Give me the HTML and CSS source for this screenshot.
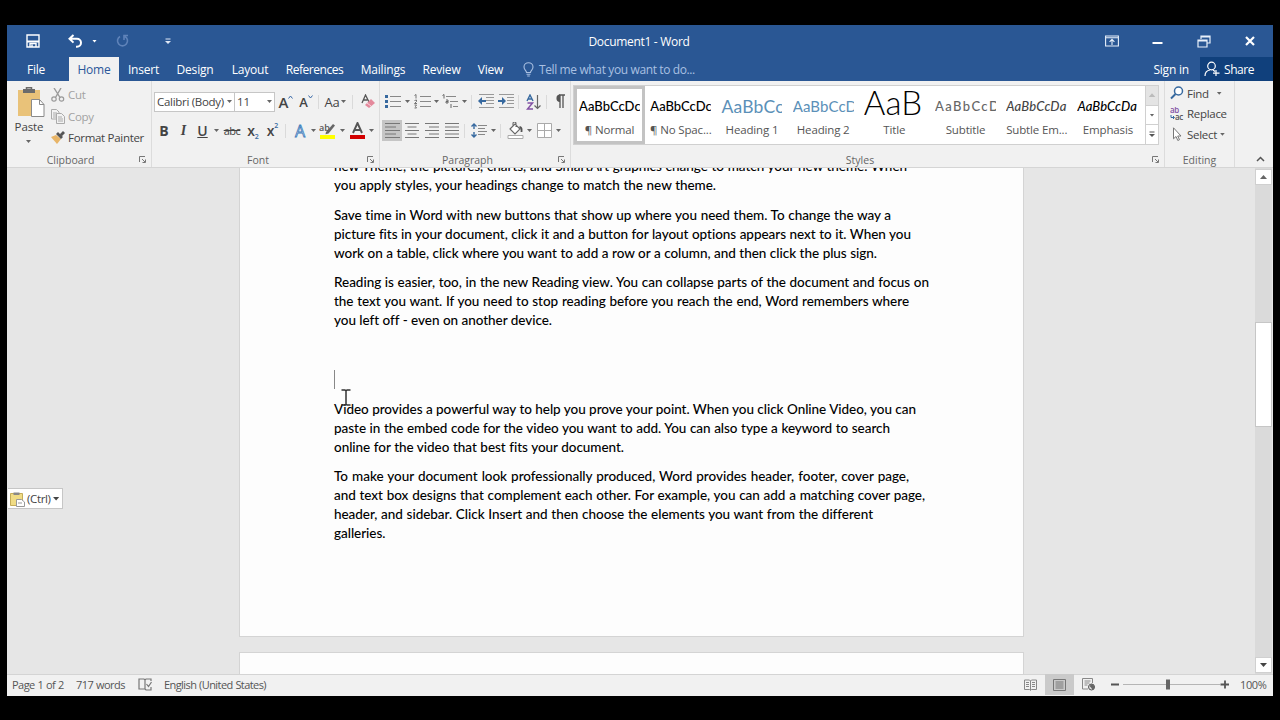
FILE: index.html
```html
<!DOCTYPE html>
<html lang="en">
<head>
<meta charset="utf-8">
<title>Document1 - Word</title>
<link rel="stylesheet" href="styles.css">
</head>
<body>
<div class="window">
  <header class="titlebar">
    <div class="quick">
      <svg class="q-save" width="14" height="14" viewBox="0 0 14 14"><path d="M1 1h12v12H1z" fill="none" stroke="#fff" stroke-width="1.400"/><path d="M1 6.500h12v2H1z" fill="#fff"/><path d="M4 13V9.500h6V13M6 10.500V13" fill="none" stroke="#fff" stroke-width="1.400"/></svg>
      <svg class="q-undo" width="15" height="14" viewBox="0 0 15 14"><path d="M5.500 1L1.500 4.800l4 3.800M2 4.800h7a4 4 0 0 1 0 8H8" fill="none" stroke="#fff" stroke-width="2"/></svg>
      <i class="caret light q-c1"></i>
      <svg class="q-redo" width="13" height="14" viewBox="0 0 13 14"><path d="M4 2.500a5 5 0 1 0 5 0M8 6V1.500h4" fill="none" stroke="#5f83b9" stroke-width="1.600"/></svg>
      <svg class="q-more" width="6" height="7" viewBox="0 0 6 7"><path d="M.5 1h5" stroke="#dfe8f5"/><path d="M0 3h6L3 6z" fill="#dfe8f5"/></svg>
    </div>
    <div class="title">Document1 - Word</div>
    <div class="controls">
      <svg width="14" height="12" viewBox="0 0 14 12"><path d="M.6 1h12.800v10H.6zM1 2.800h12M7 10V4.500M4.600 6.800L7 4.400l2.400 2.400" fill="none" stroke="#e8f0fa" stroke-width="1.100"/></svg>
      <svg class="c-min" width="11" height="12" viewBox="0 0 11 12"><path d="M.5 8h10" stroke="#fff" stroke-width="2"/></svg>
      <svg class="c-res" width="14" height="13" viewBox="0 0 14 13"><path d="M1 5h9v7H1zM1 6h9M4 4V1h9v7h-3M4 2h9" fill="none" stroke="#e8f0fa" stroke-width="1.200"/></svg>
      <svg class="c-close" width="10" height="10" viewBox="0 0 10 10"><path d="M1 1l8 8M9 1L1 9" stroke="#fff" stroke-width="2.200"/></svg>
    </div>
  </header>
  <nav class="tabs">
    <span class="tab t-file">File</span><span class="tab t-home">Home</span><span class="tab t-ins">Insert</span><span class="tab t-des">Design</span><span class="tab t-lay">Layout</span><span class="tab t-ref">References</span><span class="tab t-mail">Mailings</span><span class="tab t-rev">Review</span><span class="tab t-view">View</span>
    <span class="tell"><svg width="11" height="15" viewBox="0 0 11 15"><path d="M3.500 10.500c0-2-2.500-2.500-2.500-5.500a4.500 4.300 0 0 1 9 0c0 3-2.500 3.500-2.500 5.500zM3.500 12.300h4M4.200 14h2.600" fill="none" stroke="#a9c0e2" stroke-width="1.100"/></svg><span>Tell me what you want to do...</span></span>
    <span class="signin">Sign in</span>
    <span class="share"><svg width="16" height="16" viewBox="0 0 16 16"><circle cx="7.500" cy="5" r="3.800" fill="none" stroke="#fff" stroke-width="1.200"/><path d="M1 15c0-3.500 2-5.500 5-6M9 9l2 1.500M12 9v6M9 12.200h6.500" fill="none" stroke="#fff" stroke-width="1.200"/></svg><span>Share</span></span>
  </nav>
  <section class="ribbon">
    <div class="group g-clip">
      <div class="clip">
        <div class="paste">
          <svg width="28" height="31" viewBox="0 0 28 31"><path d="M1 3h22v26H1z" fill="#e9c279"/><path d="M6 2h12v4H6z" fill="#6b6b6b"/><path d="M9.500 2.500V.8h5v1.700" fill="none" stroke="#6b6b6b" stroke-width="1.500"/><path d="M14.500 12.500h8l4.500 5v12H14.500z" fill="#fff" stroke="#8a8a8a"/><path d="M22.500 12.500v5H27" fill="none" stroke="#8a8a8a"/></svg>
          <span>Paste</span><i class="caret"></i>
        </div>
        <div class="cliplist">
          <div class="cmd off"><svg width="14" height="14" viewBox="0 0 14 14"><path d="M3 0l6 9.500M10 0L4.500 9.500" stroke="#9a9a9a" stroke-width="1.400"/><circle cx="3" cy="11" r="2.200" fill="none" stroke="#9a9a9a" stroke-width="1.200"/><circle cx="10.500" cy="11" r="2.200" fill="none" stroke="#9a9a9a" stroke-width="1.200"/></svg><span>Cut</span></div>
          <div class="cmd off"><svg width="14" height="15" viewBox="0 0 14 15"><path d="M.5.5h5l2.500 2.500v7H.5zM2 4h4M2 6h4M2 8h3" fill="#f2f2f2" stroke="#aaa"/><path d="M5.500 4.500h5l3 3v7h-8zM7 8h4M7 10h5M7 12h5" fill="#f2f2f2" stroke="#aaa"/></svg><span>Copy</span></div>
          <div class="cmd fmt"><svg width="14" height="13" viewBox="0 0 14 13"><path d="M0 6l5-2 5 4-4 5z" fill="#e8b568"/><path d="M5 3l2-2 5 5-2 2zM9 3l3-3 2 2-3 3z" fill="#555"/></svg><span>Format Painter</span></div>
        </div>
      </div>
      <div class="label"><span>Clipboard</span><svg class="launch" width="7" height="7" viewBox="0 0 7 7"><path d="M.5 6V.5H6M3 3l3 3M6.500 3.500v3h-3" fill="none" stroke="#777"/></svg></div>
    </div>

    <div class="group g-font">
      <div class="row">
        <div class="combo fontname"><span>Calibri (Body)</span><i class="caret"></i></div><div class="combo fontsize"><span>11</span><i class="caret"></i></div>
        <b class="c w20 grow">A<svg width="5" height="4" viewBox="0 0 5 4"><path d="M.5 3.500L2.500 1l2 2.500" fill="none" stroke="#3a6aa8"/></svg></b>
        <b class="c w20 shrink">A<svg width="5" height="4" viewBox="0 0 5 4"><path d="M.5.5L2.500 3l2-2.500" fill="none" stroke="#3a6aa8"/></svg></b>
        <i class="sep m3"></i><span class="c w18 case">Aa</span><i class="caret"></i><i class="sep m5"></i>
        <span class="c w22"><svg width="15" height="15" viewBox="0 0 15 15"><path d="M1 9l3.500-8L8 8M2.300 6h4" fill="none" stroke="#555" stroke-width="1.300"/><path d="M4 11l6-6 4 4-6 5z" fill="#e4899c"/><path d="M6 9l4 3" stroke="#f6d5dc"/></svg></span>
      </div>
      <div class="row">
        <b class="c w20">B</b><b class="c w19 ital">I</b><b class="c w19 und">U</b><i class="caret cw9"></i><span class="c w22 strike">abc</span><b class="c w20 small">x<sub>2</sub></b><b class="c w19 small">x<sup>2</sup></b><i class="sep m3"></i>
        <span class="c w20 fx">A</span><i class="caret cw7"></i>
        <span class="c w22"><svg width="18" height="17" viewBox="0 0 18 17"><text x="0" y="9" class="icontext hl">ab</text><path d="M7 10l7-8 2 1.500-6.500 8-3 .8z" fill="#666"/><path d="M1 13h15v4H1z" fill="#ffff00"/></svg></span><i class="caret cw7"></i>
        <span class="c w22"><svg width="17" height="17" viewBox="0 0 17 17"><path d="M4 11L8.500 1 13 11M5.500 8h6" fill="none" stroke="#555" stroke-width="1.900"/><path d="M1 13h15v4H1z" fill="#d30000"/></svg></span><i class="caret cw7"></i>
      </div>
      <div class="label"><span>Font</span><svg class="launch" width="7" height="7" viewBox="0 0 7 7"><path d="M.5 6V.5H6M3 3l3 3M6.500 3.500v3h-3" fill="none" stroke="#777"/></svg></div>
    </div>

    <div class="group g-para">
      <div class="row">
        <span class="c w22"><svg width="16" height="15" viewBox="0 0 16 15"><path d="M5 2.500h11M5 7.500h11M5 12.500h11" stroke="#888"/><path d="M0 1h3v3H0zM0 6h3v3H0zM0 11h3v3H0z" fill="#37699f"/></svg></span><i class="caret cw7"></i>
        <span class="c w22"><svg width="17" height="15" viewBox="0 0 17 15"><path d="M6 2.500h11M6 7.500h11M6 12.500h11" stroke="#888"/><path d="M.5 1.500L2 .5v4M.5 6.500l2-.5v1.500l-2 2h2.500M.5 11h2l-1 1.500 1 1.500h-2" fill="none" stroke="#666" stroke-width=".9"/></svg></span><i class="caret cw7"></i>
        <span class="c w21"><svg width="17" height="15" viewBox="0 0 17 15"><path d="M4 2.500h10M8 7.500h8M11 12.500h5" stroke="#888"/><path d="M.5 1.500L2 .5v4M4 6h2v3H4v-1.500h2M9 10v4" fill="none" stroke="#666"/></svg></span><i class="caret cw7"></i>
        <i class="sep m3"></i>
        <span class="c w20"><svg width="16" height="15" viewBox="0 0 16 15"><path d="M1 .5h15M8 3.500h8M8 6.500h8M8 9.500h8M1 13.500h15" stroke="#999"/><path d="M0 7l4-4v3h4v2H4v3z" fill="#37699f"/></svg></span>
        <span class="c w20"><svg width="16" height="15" viewBox="0 0 16 15"><path d="M1 .5h15M9 3.500h7M9 6.500h7M9 9.500h7M1 13.500h15" stroke="#999"/><path d="M8 7L4 3v3H0v2h4v3z" fill="#37699f"/></svg></span>
        <i class="sep m2"></i>
        <span class="c w22 sort"><svg width="15" height="16" viewBox="0 0 15 16"><path d="M1 7l3-6 3 6M2 5h4" fill="none" stroke="#37699f" stroke-width="1.400"/><path d="M1.500 9h5l-5 6H7" fill="none" stroke="#8352a4" stroke-width="1.500"/><path d="M11.500 1v13M8.500 11.500l3 3 3-3" fill="none" stroke="#666" stroke-width="1.200"/></svg></span>
        <i class="sep m1"></i>
        <span class="c w20"><svg width="11" height="15" viewBox="0 0 11 15"><path d="M5 1h6M6 1v13M9 1v13" stroke="#555" stroke-width="1.300"/><path d="M6 .5v7.500a3.500 3.700 0 0 1 0-7.500z" fill="#555"/></svg></span>
      </div>
      <div class="row">
        <span class="c w20 pressed"><svg width="15" height="15" viewBox="0 0 15 15"><path d="M0 .5h15M0 4h11M0 7.500h15M0 11h11M0 14.500h15" stroke="#777"/></svg></span>
        <span class="c w20"><svg width="14" height="15" viewBox="0 0 14 15"><path d="M0 .5h14M2.500 4h9M0 7.500h14M2.500 11h9M0 14.500h14" stroke="#777"/></svg></span>
        <span class="c w20"><svg width="14" height="15" viewBox="0 0 14 15"><path d="M0 .5h14M4 4h10M0 7.500h14M4 11h10M0 14.500h14" stroke="#777"/></svg></span>
        <span class="c w20"><svg width="14" height="15" viewBox="0 0 14 15"><path d="M0 .5h14M0 4h14M0 7.500h14M0 11h14M0 14.500h14" stroke="#777"/></svg></span>
        <i class="sep m2"></i>
        <span class="c w22"><svg width="16" height="15" viewBox="0 0 16 15"><path d="M7 2.500h9M7 5.500h7M7 8.500h9M7 11.500h7" stroke="#888"/><path d="M3 1v5M.5 3.500L3 1l2.500 2.500M3 9v5M.5 11.500L3 14l2.500-2.500" fill="none" stroke="#37699f" stroke-width="1.400"/></svg></span><i class="caret cw7"></i>
        <i class="sep m3"></i>
        <span class="c w20"><svg width="17" height="17" viewBox="0 0 17 17"><path d="M3 7l5-5 5 5-5 5zM6 4V1.500a1.500 1.500 0 0 1 3 0V5" fill="#fff" stroke="#666" stroke-width="1.100"/><path d="M12.500 5c3 .5 2 3 2 5" fill="none" stroke="#555" stroke-width="1.800"/><path d="M1 13.500h15v3H1z" fill="#fff" stroke="#aaa"/></svg></span><i class="caret cw9"></i>
        <span class="c w20"><svg width="15" height="15" viewBox="0 0 15 15"><path d="M.5.5h14v14H.5zM7.500 1v13M1 7.500h13" fill="#fff" stroke="#aaa"/></svg></span><i class="caret cw9"></i>
      </div>
      <div class="label"><span>Paragraph</span><svg class="launch" width="7" height="7" viewBox="0 0 7 7"><path d="M.5 6V.5H6M3 3l3 3M6.500 3.500v3h-3" fill="none" stroke="#777"/></svg></div>
    </div>

    <div class="group g-styles">
      <div class="gallery">
        <div class="style sel"><span class="prev">AaBbCcDc</span><span class="nm">¶ Normal</span></div>
        <div class="style"><span class="prev">AaBbCcDc</span><span class="nm">¶ No Spac...</span></div>
        <div class="style"><span class="prev h1">AaBbCc</span><span class="nm">Heading 1</span></div>
        <div class="style"><span class="prev h2">AaBbCcD</span><span class="nm">Heading 2</span></div>
        <div class="style"><span class="prev ttl">AaB</span><span class="nm">Title</span></div>
        <div class="style"><span class="prev sub">AaBbCcD</span><span class="nm">Subtitle</span></div>
        <div class="style"><span class="prev sem">AaBbCcDa</span><span class="nm">Subtle Em...</span></div>
        <div class="style"><span class="prev emp">AaBbCcDa</span><span class="nm">Emphasis</span></div>
        <div class="gscroll"><span class="dis"><i class="caret up"></i></span><span><i class="caret"></i></span><span><svg width="6" height="7" viewBox="0 0 6 7"><path d="M.5 1h5" stroke="#555"/><path d="M0 3h6L3 6z" fill="#555"/></svg></span></div>
      </div>
      <div class="label"><span>Styles</span><svg class="launch" width="7" height="7" viewBox="0 0 7 7"><path d="M.5 6V.5H6M3 3l3 3M6.500 3.500v3h-3" fill="none" stroke="#777"/></svg></div>
    </div>

    <div class="group g-edit">
      <div class="editlist">
        <div class="cmd"><svg width="14" height="14" viewBox="0 0 14 14"><circle cx="8.500" cy="5" r="4" fill="#fff" stroke="#37699f" stroke-width="1.500"/><path d="M5.500 8L1 12.500" stroke="#37699f" stroke-width="2"/></svg><span>Find</span><i class="caret fc"></i></div>
        <div class="cmd rep"><svg width="15" height="14" viewBox="0 0 15 14"><text x="0" y="6" class="icontext pur">ab</text><text x="5" y="13" class="icontext">ac</text><path d="M1 8v2.500h3M3 9l1.500 1.500L3 12" fill="none" stroke="#37699f"/></svg><span>Replace</span></div>
        <div class="cmd"><svg width="14" height="14" viewBox="0 0 14 14"><path d="M3.500.8v11l2.500-2.300 1.800 4 1.700-.8-1.800-3.700H11z" fill="#fff" stroke="#777"/></svg><span>Select</span><i class="caret sc"></i></div>
      </div>
      <div class="label plain"><span>Editing</span></div>
    </div>
    <div class="collapse"><svg width="9" height="6" viewBox="0 0 9 6"><path d="M1 5l3.500-3.500L8 5" fill="none" stroke="#555" stroke-width="1.500"/></svg></div>
  </section>

  <main class="work">
    <div class="canvas">
      <article class="page">
        <p><span class="ln" style="width:573px">new Theme, the pictures, charts, and SmartArt graphics change to match your new theme. When</span><span class="ln" style="width:382px">you apply styles, your headings change to match the new theme.</span></p>
        <p><span class="ln" style="width:557px">Save time in Word with new buttons that show up where you need them. To change the way a</span><span class="ln" style="width:577px">picture fits in your document, click it and a button for layout options appears next to it. When you</span><span class="ln" style="width:543px">work on a table, click where you want to add a row or a column, and then click the plus sign.</span></p>
        <p><span class="ln" style="width:595px">Reading is easier, too, in the new Reading view. You can collapse parts of the document and focus on</span><span class="ln" style="width:575px">the text you want. If you need to stop reading before you reach the end, Word remembers where</span><span class="ln" style="width:218px">you left off - even on another device.</span></p>
        <p class="blank"></p>
        <p class="blank"><i class="cursor"></i><svg class="ibeam" width="10" height="17" viewBox="0 0 10 17"><path d="M.5 1H4l1 1 1-1h3.500M5 2v13M.5 16H4l1-1 1 1h3.500" fill="none" stroke="#333" stroke-width="1.500"/></svg></p>
        <p><span class="ln" style="width:582px">Video provides a powerful way to help you prove your point. When you click Online Video, you can</span><span class="ln" style="width:556px">paste in the embed code for the video you want to add. You can also type a keyword to search</span><span class="ln" style="width:290px">online for the video that best fits your document.</span></p>
        <p><span class="ln" style="width:575px">To make your document look professionally produced, Word provides header, footer, cover page,</span><span class="ln" style="width:591px">and text box designs that complement each other. For example, you can add a matching cover page,</span><span class="ln" style="width:539px">header, and sidebar. Click Insert and then choose the elements you want from the different</span><span class="ln" style="width:52px">galleries.</span></p>
      </article>
      <article class="page next"></article>
      <div class="ctrl"><svg width="15" height="16" viewBox="0 0 15 16"><path d="M.5 2.500h12v12H.5z" fill="#f0dc85" stroke="#c5ad5a"/><path d="M3.500 1.500h6v2.500h-6z" fill="#888"/><path d="M6.500 8.500h5l3 2.500v4.500h-8zM8 12h4" fill="#fff" stroke="#999"/></svg><span>(Ctrl)</span><i class="caret big"></i></div>
    </div>
    <div class="scroll">
      <span class="sbtn"><i class="caret up"></i></span><span class="thumb"></span><span class="sbtn end"><i class="caret big"></i></span>
    </div>
  </main>
  <footer class="status">
    <span class="s-page">Page 1 of 2</span><span class="s-words">717 words</span>
    <svg class="s-proof" width="14" height="13" viewBox="0 0 14 13"><path d="M7 2v9H1V1h5l1 1 1-1h5v2M7 11l1 1h5V9M8.500 6l2 2.500L13.500 4" fill="none" stroke="#777" stroke-width="1.200"/></svg>
    <span class="s-lang">English (United States)</span>
    <span class="s-right">
      <span class="view"><svg width="13" height="12" viewBox="0 0 13 12"><path d="M.5 1h5l1 1 1-1h5v9.500h-5l-1 1-1-1h-5zM6.500 2v9M2 3.500h3M2 5.500h3M2 7.500h3M8 3.500h3M8 5.500h3M8 7.500h3" fill="none" stroke="#888"/></svg></span>
      <span class="view on"><svg width="13" height="12" viewBox="0 0 13 12"><path d="M.5.5h12v11H.5zM2.500 3h8M2.500 5h8M2.500 7h8M2.500 9h8" fill="none" stroke="#777"/></svg></span>
      <span class="view"><svg width="13" height="13" viewBox="0 0 13 13"><path d="M6 11H.5V.5h10V5M2.500 3h6M2.500 5h5M2.500 7h3" fill="none" stroke="#888"/><circle cx="9.500" cy="9" r="3" fill="#ddd" stroke="#555"/><path d="M9.500 6a3 3 0 0 1 1 5.800L9 9.500 7.500 8z" fill="#666"/></svg></span>
      <svg class="zoom" width="118" height="13" viewBox="0 0 118 13"><path d="M0 6.500h8M109.500 6.500h9M114 2.500v8" stroke="#555" stroke-width="1.800"/><path d="M12 6.500h97" stroke="#b5b5b5"/><path d="M55 1.500h4v10h-4z" fill="#666"/></svg>
      <span class="pct">100%</span>
    </span>
  </footer>
</div>
</body>
</html>
```

FILE: styles.css
```css
* { box-sizing: border-box; }
body { margin: 0; height: 720px; overflow: hidden; background: #000; padding: 25px 7px 24px; font-family: "Open Sans", "Noto Sans", sans-serif; font-size: 11.5px; color: #444; }
svg { display: block; flex: none; }
span { white-space: nowrap; }
.window { width: 1266px; height: 671px; display: flex; flex-direction: column; overflow: hidden; background: #e6e6e6; }

.caret { display: block; flex: none; width: 5px; height: 3px; background: #666; clip-path: polygon(0 0, 100% 0, 50% 100%); }
.caret.light { background: #fff; }
.caret.up { clip-path: polygon(50% 0, 100% 100%, 0 100%); width: 7px; height: 4px; }
.caret.big { width: 7px; height: 4px; background: #444; }
.caret.cw7 { margin: 0 1px; }
.caret.cw9 { margin: 0 2px; }

.titlebar { height: 32px; flex: none; display: grid; grid-template-columns: 1fr auto 1fr; align-items: center; background: #2a5794; color: #fff; }
.quick { display: flex; align-items: center; padding-left: 19px; }
.q-undo { margin-left: 28px; }
.q-c1 { margin-left: 9px; }
.q-redo { margin-left: 19px; }
.q-more { margin-left: 36px; }
.title { font-size: 12px; letter-spacing: -.3px; padding-right: 2px; }
.controls { display: flex; align-items: center; justify-content: flex-end; padding-right: 18px; }
.c-min { margin-left: 33px; }
.c-res { margin-left: 34px; }
.c-close { margin-left: 34px; }

.tabs { height: 24px; flex: none; display: flex; background: #2a5794; color: #fff; font-size: 12px; line-height: 25px; letter-spacing: -.2px; }
.tab { text-align: center; flex: none; }
.t-file { width: 58px; }
.t-home { width: 50px; margin-left: 4px; background: #f1f1f1; color: #2b579a; }
.t-ins { width: 49px; }
.t-des { width: 54px; }
.t-lay { width: 56px; }
.t-ref { width: 73px; letter-spacing: -.45px; }
.t-mail { width: 64px; }
.t-rev { width: 53px; }
.t-view { width: 45px; }
.tell { display: flex; align-items: center; gap: 5px; margin-left: 10px; color: #a9c0e2; letter-spacing: -.38px; }
.signin { margin-left: auto; margin-right: 11px; }
.share { width: 73px; display: flex; align-items: center; gap: 4px; padding-left: 4px; background: #10407c; letter-spacing: -.45px; }

.ribbon { height: 87px; flex: none; display: flex; background: #f1f1f1; border-bottom: 1px solid #d5d5d5; }
.group { display: flex; flex-direction: column; border-right: 1px solid #dcdcdc; flex: none; }
.label { margin-top: auto; height: 15px; display: grid; grid-template-columns: 1fr 17px; align-items: center; text-align: center; font-size: 10.5px; color: #666; }
.label.plain { grid-template-columns: 1fr; }
.label span { line-height: 14px; }
.launch { justify-self: center; }
.g-clip { width: 145px; }
.clip { display: flex; }
.paste { width: 43px; display: flex; flex-direction: column; align-items: center; padding-top: 6px; }
.paste svg { margin-left: 4px; }
.paste span { line-height: 14px; margin-top: 2px; letter-spacing: -.1px; padding-left: 1px; }
.paste .caret { margin-top: 6px; }
.cliplist { padding: 3px 0 0 1px; }
.cmd { height: 21.500px; display: flex; align-items: center; gap: 3px; letter-spacing: -.3px; }
.off { color: #a2a2a2; }
.row { display: flex; align-items: center; height: 21px; }
.g-font { width: 228px; padding: 10px 0 0 2px; }
.g-font .row + .row, .g-para .row + .row { margin-top: 8px; }
.combo { height: 20px; border: 1px solid #c6c6c6; background: #fff; display: flex; align-items: center; justify-content: space-between; padding: 0 2px; font-size: 11.5px; }
.fontname { width: 81px; }
.fontname span { width: 70px; letter-spacing: -.3px; }
.fontsize { width: 41px; border-left: 0; }
.c { display: flex; align-items: center; justify-content: center; flex: none; height: 21px; }
.w18 { width: 18px; }
.w19 { width: 19px; }
.w20 { width: 20px; }
.w21 { width: 21px; }
.w22 { width: 22px; }
.sep { width: 1px; height: 14px; background: #dadada; flex: none; }
.m1 { margin: 0 2px; }
.m2 { margin: 0 3px 0 2px; }
.m3 { margin: 0 4px 0 3px; }
.m5 { margin: 0 4px 0 6px; }
.g-font b { font-size: 14px; }
.grow, .shrink { font-weight: 600 !important; padding-left: 2px; }
.grow svg, .shrink svg { margin-bottom: 9px; }
.g-font .grow { font-size: 15px; }
.g-font .shrink { font-size: 13px; }
.case { font-size: 13px; letter-spacing: -.2px; }
.ital { font-style: italic; font-family: "Liberation Serif", serif; }
.und { text-decoration: underline; font-weight: 600; }
.strike { text-decoration: line-through; font-size: 11px; letter-spacing: -.5px; }
.g-font .small { font-size: 14px; font-weight: 600; }
.small sub, .small sup { font-size: 7px; color: #37699f; line-height: 8px; }
.small sub { align-self: flex-end; }
.small sup { align-self: flex-start; margin-top: 2px; }
.fx { font-size: 16px; color: #f1f1f1; -webkit-text-stroke: .8px #3e7dbd; }
.icontext { font-family: "Open Sans", sans-serif; font-size: 8px; font-weight: 600; fill: #555; }
.icontext.hl { font-size: 9px; }
.pur { fill: #8352a4; }
.g-para { width: 191px; padding: 10px 0 0 2px; }
.pressed { background: #c5c5c5; }

.g-styles { width: 594px; padding: 4px 0 0 2px; }
.gallery { width: 586px; height: 60px; display: flex; background: #fff; border: 1px solid #d0d0d0; }
.style { width: 71.200px; flex: none; display: flex; flex-direction: column; align-items: center; padding-top: 5px; }
.style.sel { border: 3px solid #c3c3c3; padding-top: 2px; }
.prev { width: 61px; height: 30px; overflow: hidden; line-height: 31px; font-family: Lato, sans-serif; font-size: 13px; font-weight: 500; color: #000; text-align: left; flex: none; }
.nm { line-height: 18px; font-size: 11.5px; color: #555; letter-spacing: -.15px; }
.h1 { font-size: 17.500px; font-weight: 400; color: #5b90b8; letter-spacing: .2px; }
.h2 { font-size: 15px; font-weight: 400; color: #5b90b8; letter-spacing: .1px; }
.ttl { font-size: 33px; font-weight: 300; line-height: 22px; }
.sub { color: #666; letter-spacing: 1.400px; }
.sem { color: #444; font-style: italic; letter-spacing: .2px; }
.emp { font-style: italic; letter-spacing: .1px; }
.gscroll { width: 13px; margin-left: auto; border-left: 1px solid #d0d0d0; display: flex; flex-direction: column; }
.gscroll span { flex: 1; display: flex; align-items: center; justify-content: center; border-bottom: 1px solid #d0d0d0; }
.gscroll span:last-child { border-bottom: 0; }
.dis { background: #e4e4e4; }
.dis .caret { background: #bbb; }

.g-edit { width: 70px; }
.editlist { padding: 2px 0 0 5px; }
.editlist .cmd { height: 20.500px; }
.rep { gap: 2px; }
.fc { margin-left: 5px; }
.collapse { flex: 1; display: flex; align-items: flex-end; padding: 0 0 5px 21px; }

.work { flex: 1; display: flex; min-height: 0; }
.canvas { width: 1248px; position: relative; display: flex; flex-direction: column; overflow: hidden; padding-left: 232px; }
.page { width: 785px; height: 469px; flex: none; background: #fdfdfd; border: 1px solid #d4d4d4; border-top: 0; padding: 0 0 0 94px; font-family: Lato, "Liberation Sans", sans-serif; font-size: 13.500px; font-weight: 500; line-height: 19px; font-variant-ligatures: none; letter-spacing: -.04px; color: #000; }
.page p { margin: 0 0 10.550px; }
.page p:first-child { margin-top: -11px; }
.ln { display: block; text-align-last: justify; }
.blank { height: 19px; position: relative; }
.cursor { display: block; width: 1px; height: 19px; background: #888; }
.ibeam { position: absolute; left: 7px; top: 19px; }
.next { margin-top: 15px; border-top: 1px solid #d4d4d4; }
.ctrl { position: absolute; left: 1px; top: 320px; width: 55px; height: 21px; display: flex; align-items: center; gap: 2px; padding-left: 2px; background: #fff; border: 1px solid #c6c6c6; border-left: 0; font-size: 11.500px; letter-spacing: -.35px; }
.scroll { width: 17px; display: flex; flex-direction: column; background: #dadada; }
.sbtn { height: 16px; margin-top: 1px; flex: none; display: flex; align-items: center; justify-content: center; background: #fff; border: 1px solid #d0d0d0; }
.thumb { height: 105px; margin-top: 137px; background: #fff; border: 1px solid #c6c6c6; }
.end { margin-top: auto; margin-bottom: 1px; }

.status { height: 22px; flex: none; display: flex; align-items: center; background: #f1f1f1; border-top: 1px solid #d4d4d4; padding: 0 0 2px 5px; font-size: 11px; color: #555; }
.s-page { width: 64px; letter-spacing: -.55px; word-spacing: .5px; }
.s-words { width: 62px; letter-spacing: -.55px; word-spacing: .5px; }
.s-lang { margin-left: 12px; letter-spacing: -.58px; word-spacing: .5px; }
.s-right { margin-left: auto; height: 21px; display: flex; align-items: center; padding-right: 6px; }
.view { width: 29px; height: 100%; display: flex; align-items: center; justify-content: center; }
.on { background: #cacaca; }
.zoom { margin-left: 8px; }
.pct { width: 27px; margin-left: 11px; letter-spacing: -.4px; }
```
